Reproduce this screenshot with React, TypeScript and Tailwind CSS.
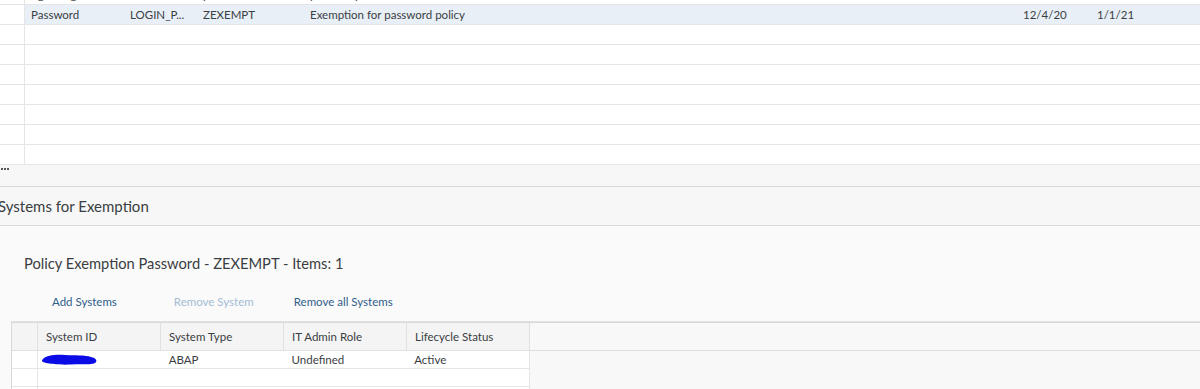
const topRows = [
  { a: "Z_Items_SELOM", b: "LWAGE", c: "pw", d: "pw exemption", e: "6/24/20", f: "12/1/20" },
  { a: "Password", b: "LOGIN_P...", c: "ZEXEMPT", d: "Exemption for password policy", e: "12/4/20", f: "1/1/21", selected: true },
  null,
  null,
  null,
  null,
  null,
  null,
  null,
];

const headers = ["System ID", "System Type", "IT Admin Role", "Lifecycle Status"];

function Scribble() {
  return (
    <svg width="57" height="13" viewBox="0 0 57 13" className="block">
      <path
        d="M2 6 C6 2 14 1.5 24 2 C34 2.5 44 2 50 4 C55 5 57 8 54 10 C50 12 40 11 30 11.5 C20 12 10 11 5 10 C1 9 0 8 2 6 Z"
        fill="#0b0be6"
      />
    </svg>
  );
}

export default function App() {
  return (
    <div className="w-[1200px] h-[389px] overflow-hidden bg-[#fafafa] font-['Lato','Liberation_Sans',Arial,sans-serif] text-[11.5px] text-[#3a3e42]">
      {/* top table */}
      <div className="bg-white -mt-[15px]">
        {topRows.map((row, i) => (
          <div
            key={i}
            className={`flex h-[20px] border-b border-[#e5e5e5] items-center ${
              row?.selected ? "bg-[#e8eff7]" : "bg-white"
            }`}
          >
            <div className="w-[25px] shrink-0 h-full border-r border-[#e5e5e5] bg-white" />
            <div className="w-[99px] shrink-0 pl-[6px] overflow-hidden whitespace-nowrap">{row?.a}</div>
            <div className="w-[73px] shrink-0 pl-[6px] overflow-hidden whitespace-nowrap">{row?.b}</div>
            <div className="w-[107px] shrink-0 pl-[6px] overflow-hidden whitespace-nowrap">{row?.c}</div>
            <div className="w-[713px] shrink-0 pl-[6px] overflow-hidden whitespace-nowrap">{row?.d}</div>
            <div className="w-[74px] shrink-0 pl-[6px] overflow-hidden whitespace-nowrap">{row?.e}</div>
            <div className="flex-1 pl-[6px] overflow-hidden whitespace-nowrap">{row?.f}</div>
          </div>
        ))}
      </div>

      <div className="h-[22px] bg-[#f7f7f7] border-b border-[#d9d9d9] flex gap-[1px] pl-[1px] pt-[3px]">
        <span className="w-[2px] h-[2px] bg-[#555]" />
        <span className="w-[2px] h-[2px] bg-[#555]" />
        <span className="w-[2px] h-[2px] bg-[#555]" />
      </div>

      <div className="h-[39px] bg-[#f7f7f7] border-b border-[#d9d9d9] flex items-center -ml-[2px] text-[15px]">
        Systems for Exemption
      </div>

      <div className="pl-[11px]">
        <div className="pl-[13px] pt-[28px] text-[14.7px] leading-[18px]">
          Policy Exemption Password - ZEXEMPT - Items: 1
        </div>

        <div className="h-[50px] pt-[11px] flex items-center border-b border-[#e3e3e3] pl-[41px] text-[11.5px]">
          <button type="button" className="text-[#2f5d8c]">Add Systems</button>
          <button type="button" className="ml-[57px] text-[#a3bcd5]">Remove System</button>
          <button type="button" className="ml-[40px] text-[#2f5d8c]">Remove all Systems</button>
        </div>

        <div className="border-t border-l border-[#d8d8d8]">
          <div className="flex h-[28px] border-b border-[#e0e0e0]">
            <div className="w-[26px] bg-[#f4f4f4] border-r border-[#e0e0e0]" />
            {headers.map((h) => (
              <div
                key={h}
                className="w-[123px] pl-[8px] flex items-center bg-[#f4f4f4] border-r border-[#e0e0e0]"
              >
                {h}
              </div>
            ))}
            <div className="flex-1 bg-[#f8f8f8]" />
          </div>

          {[0, 1, 2].map((r) => (
            <div key={r} className="flex h-[18px]">
              <div className="w-[26px] bg-white border-r border-b border-[#e5e5e5]" />
              <div className="w-[492px] flex bg-white border-r border-b border-[#e5e5e5]">
                {r === 0 && (
                  <>
                    <div className="w-[123px] pl-[3px] flex items-center">
                      <Scribble />
                    </div>
                    <div className="w-[123px] pl-[8px] flex items-center">ABAP</div>
                    <div className="w-[123px] pl-[8px] flex items-center">Undefined</div>
                    <div className="w-[123px] pl-[8px] flex items-center">Active</div>
                  </>
                )}
              </div>
              <div className="flex-1 bg-[#f8f8f8]" />
            </div>
          ))}
        </div>
      </div>
    </div>
  );
}
